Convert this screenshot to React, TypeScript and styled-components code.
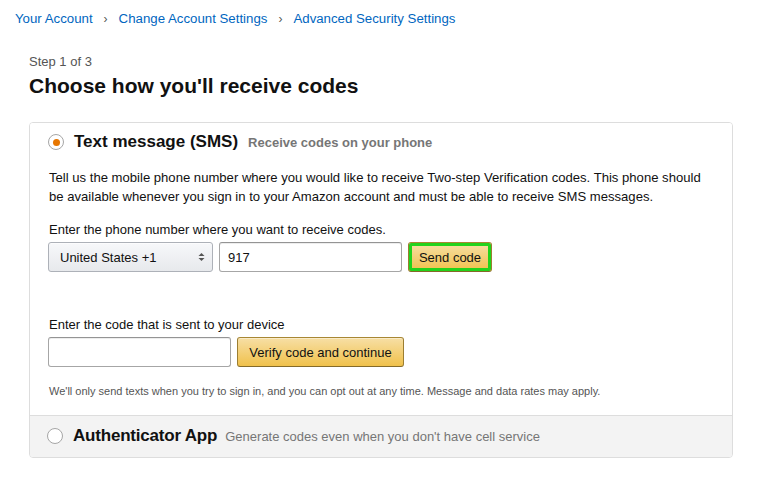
import styled, { createGlobalStyle } from 'styled-components'

const GlobalStyle = createGlobalStyle`
  body {
    margin: 0;
    background: #fff;
    font-family: "Liberation Sans", Arial, sans-serif;
    color: #111;
  }
`

const Page = styled.div`
  width: 771px;
  height: 489px;
  overflow: hidden;
`

const Breadcrumb = styled.nav`
  display: flex;
  align-items: center;
  margin: 11px 0 0 15px;
  font-size: 13.25px;
  line-height: 16px;
`

const Crumb = styled.a`
  color: #0066c0;
  text-decoration: none;
`

const Sep = styled.span`
  color: #555;
  font-size: 12px;
  margin: 0 11px;
`

const Content = styled.main`
  padding-left: 29px;
  width: 704px;
`

const Step = styled.div`
  margin-top: 27px;
  font-size: 13px;
  line-height: 16px;
  color: #555;
`

const Heading = styled.h1`
  margin: 3px 0 0;
  font-size: 21px;
  line-height: 26px;
  font-weight: 700;
  color: #111;
`

const Box = styled.section`
  margin-top: 23px;
  border: 1px solid #ddd;
  border-radius: 4px;
  overflow: hidden;
`

const Option = styled.div<{ $muted?: boolean }>`
  padding: ${p => (p.$muted ? '8px 18px 9px 17px' : '7px 18px 17px')};
  background: ${p => (p.$muted ? '#f3f3f3' : '#fff')};
  border-top: ${p => (p.$muted ? '1px solid #ddd' : 'none')};
`

const OptionHead = styled.label`
  display: flex;
  align-items: center;
  height: 24px;
`

const Radio = styled.span<{ $checked?: boolean }>`
  box-sizing: border-box;
  width: 16px;
  height: 16px;
  border-radius: 50%;
  border: 1px solid #a6a6a6;
  background: #fff;
  display: flex;
  align-items: center;
  justify-content: center;
  margin-right: 10px;
  flex-shrink: 0;
  &::after {
    content: '';
    display: ${p => (p.$checked ? 'block' : 'none')};
    width: 7px;
    height: 7px;
    border-radius: 50%;
    background: #e77600;
  }
`

const OptionTitle = styled.span<{ $tight?: boolean }>`
  font-size: 17px;
  font-weight: 700;
  color: #111;
  letter-spacing: ${p => (p.$tight ? '-0.2px' : '0')};
  margin-right: ${p => (p.$tight ? '8px' : '10px')};
`

const OptionSub = styled.span<{ $bold?: boolean }>`
  font-size: 13px;
  font-weight: ${p => (p.$bold ? 700 : 400)};
  color: #767676;
`

const Para = styled.p`
  margin: 14px 0 0 1px;
  font-size: 13.1px;
  line-height: 19px;
  color: #111;
`

const FieldLabel = styled.div<{ $gap: number }>`
  margin: ${p => p.$gap}px 0 0 1px;
  font-size: 13px;
  line-height: 16px;
  color: #111;
`

const Controls = styled.div`
  display: flex;
  align-items: center;
  gap: 6px;
  margin-top: 4px;
`

const SelectWrap = styled.div`
  position: relative;
  width: 165px;
  height: 30px;
`

const Select = styled.select`
  appearance: none;
  box-sizing: border-box;
  width: 100%;
  height: 100%;
  padding: 0 24px 0 11px;
  border: 1px solid #adb1b8;
  border-radius: 3px;
  background: linear-gradient(#f7f8fa, #e7e9ec);
  box-shadow: 0 1px 0 rgba(255, 255, 255, 0.6) inset;
  font-family: "Liberation Sans", Arial, sans-serif;
  font-size: 13px;
  color: #111;
  outline: none;
`

const SelectArrow = styled.svg`
  position: absolute;
  right: 8px;
  top: 10px;
  pointer-events: none;
`

const TextInput = styled.input<{ $width: number }>`
  box-sizing: border-box;
  width: ${p => p.$width}px;
  height: 30px;
  padding: 0 8px;
  border: 1px solid #a6a6a6;
  border-top-color: #949494;
  border-radius: 3px;
  box-shadow: 0 1px 0 rgba(255, 255, 255, 0.5), 0 1px 0 rgba(0, 0, 0, 0.07) inset;
  font-family: "Liberation Sans", Arial, sans-serif;
  font-size: 13px;
  color: #111;
  outline: none;
`

const Button = styled.button<{ $width: number; $highlight?: boolean }>`
  box-sizing: border-box;
  width: ${p => p.$width}px;
  height: 30px;
  padding: 0;
  border: 1px solid;
  border-color: #a88734 #9c7e31 #846a29;
  border-radius: 3px;
  background: linear-gradient(#f7dfa5, #f0c14b);
  box-shadow: ${p =>
    p.$highlight ? 'inset 0 0 0 3px #22d31c' : '0 1px 0 rgba(255, 255, 255, 0.4) inset'};
  font-family: "Liberation Sans", Arial, sans-serif;
  font-size: 13px;
  color: #111;
  cursor: pointer;
`

const Note = styled.div`
  margin: 17px 0 0 1px;
  font-size: 11px;
  line-height: 14px;
  color: #555;
`

export default function App() {
  return (
    <Page>
      <GlobalStyle />
      <Breadcrumb>
        <Crumb href="#">Your Account</Crumb>
        <Sep>›</Sep>
        <Crumb href="#">Change Account Settings</Crumb>
        <Sep>›</Sep>
        <Crumb href="#">Advanced Security Settings</Crumb>
      </Breadcrumb>
      <Content>
        <Step>Step 1 of 3</Step>
        <Heading>Choose how you'll receive codes</Heading>
        <Box>
          <Option>
            <OptionHead>
              <Radio $checked />
              <OptionTitle>Text message (SMS)</OptionTitle>
              <OptionSub $bold>Receive codes on your phone</OptionSub>
            </OptionHead>
            <Para>
              Tell us the mobile phone number where you would like to receive Two-step Verification codes. This phone should
              be available whenever you sign in to your Amazon account and must be able to receive SMS messages.
            </Para>
            <FieldLabel $gap={16}>Enter the phone number where you want to receive codes.</FieldLabel>
            <Controls>
              <SelectWrap>
                <Select defaultValue="us">
                  <option value="us">United States +1</option>
                </Select>
                <SelectArrow width="7" height="10" viewBox="0 0 7 10">
                  <path d="M0.5 4 L3.5 1 L6.5 4 Z" fill="#555" />
                  <path d="M0.5 6 L3.5 9 L6.5 6 Z" fill="#555" />
                </SelectArrow>
              </SelectWrap>
              <TextInput $width={183} defaultValue="917" />
              <Button $width={84} $highlight>Send code</Button>
            </Controls>
            <FieldLabel $gap={45}>Enter the code that is sent to your device</FieldLabel>
            <Controls>
              <TextInput $width={183} />
              <Button $width={167}>Verify code and continue</Button>
            </Controls>
            <Note>
              We'll only send texts when you try to sign in, and you can opt out at any time. Message and data rates may apply.
            </Note>
          </Option>
          <Option $muted>
            <OptionHead>
              <Radio />
              <OptionTitle $tight>Authenticator App</OptionTitle>
              <OptionSub>Generate codes even when you don't have cell service</OptionSub>
            </OptionHead>
          </Option>
        </Box>
      </Content>
    </Page>
  )
}
